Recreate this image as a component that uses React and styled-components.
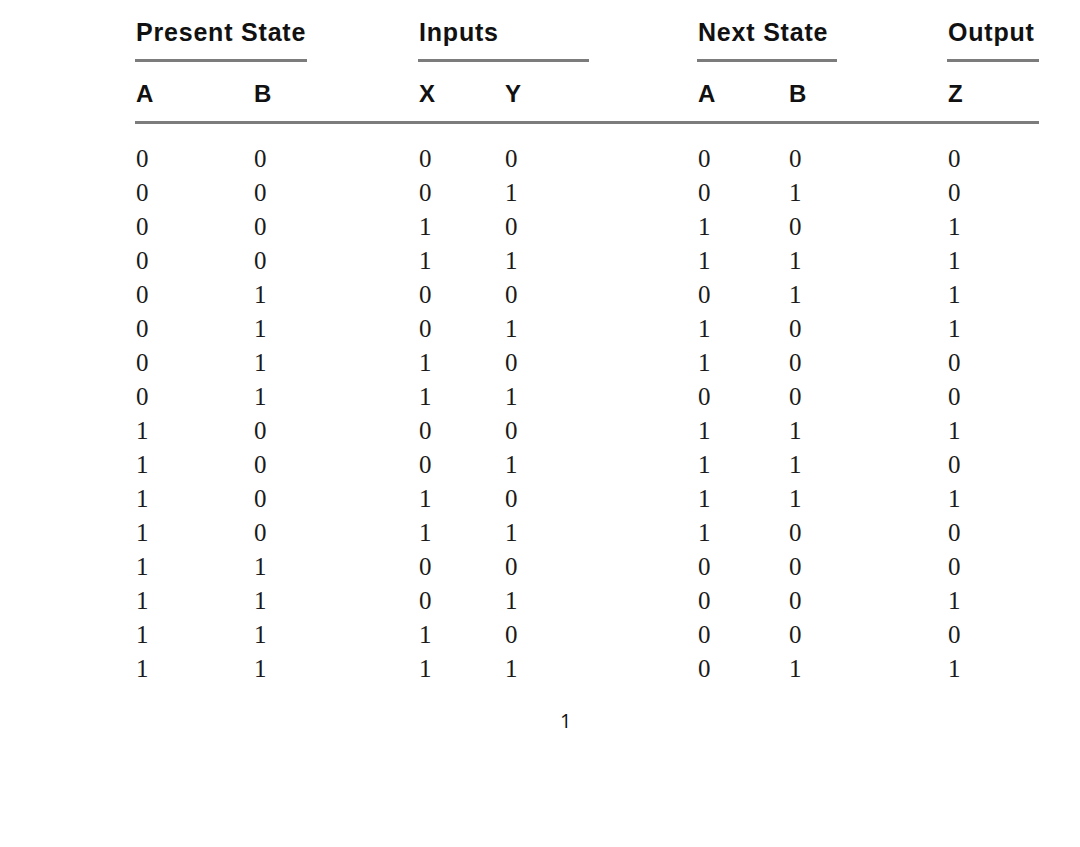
import React from "react";
import styled, { createGlobalStyle } from "styled-components";

const rows = [
  [0, 0, 0, 0, 0, 0, 0],
  [0, 0, 0, 1, 0, 1, 0],
  [0, 0, 1, 0, 1, 0, 1],
  [0, 0, 1, 1, 1, 1, 1],
  [0, 1, 0, 0, 0, 1, 1],
  [0, 1, 0, 1, 1, 0, 1],
  [0, 1, 1, 0, 1, 0, 0],
  [0, 1, 1, 1, 0, 0, 0],
  [1, 0, 0, 0, 1, 1, 1],
  [1, 0, 0, 1, 1, 1, 0],
  [1, 0, 1, 0, 1, 1, 1],
  [1, 0, 1, 1, 1, 0, 0],
  [1, 1, 0, 0, 0, 0, 0],
  [1, 1, 0, 1, 0, 0, 1],
  [1, 1, 1, 0, 0, 0, 0],
  [1, 1, 1, 1, 0, 1, 1],
];

const groups = [
  { label: "Present State", span: 2, rule: 172 },
  { label: "Inputs", span: 2, rule: 171 },
  { label: "Next State", span: 2, rule: 140 },
  { label: "Output", span: 1, rule: 92 },
];

const columns = ["A", "B", "X", "Y", "A", "B", "Z"];

const GlobalStyle = createGlobalStyle`
  body {
    margin: 0;
    background: #fff;
  }
`;

const Page = styled.div`
  width: 1080px;
  min-height: 847px;
  padding-top: 18px;
  box-sizing: border-box;
`;

const Table = styled.div`
  margin-left: 135px;
  width: 904px;
  display: grid;
  grid-template-columns: 118px 165px 86px 193px 91px 159px 92px;
`;

const Group = styled.div`
  grid-column: span ${(p) => p.span};
  display: flex;
  flex-direction: column;
`;

const GroupLabel = styled.div`
  padding-left: 1px;
  font-family: "Liberation Sans", Arial, sans-serif;
  font-weight: bold;
  font-size: 25px;
  line-height: 28px;
  letter-spacing: 0.8px;
  color: #111;
  white-space: nowrap;
`;

const GroupRule = styled.div`
  width: ${(p) => p.width}px;
  height: 3px;
  margin-top: 13px;
  background: #7c7c7c;
`;

const ColHead = styled.div`
  margin-top: 18px;
  padding-left: 1px;
  font-family: "Liberation Sans", Arial, sans-serif;
  font-weight: bold;
  font-size: 24px;
  line-height: 28px;
  color: #111;
`;

const HeadRule = styled.div`
  grid-column: 1 / -1;
  height: 3px;
  margin: 13px 0 18px;
  background: #7c7c7c;
`;

const Cell = styled.div`
  padding-left: 1px;
  font-family: "Liberation Serif", "Times New Roman", serif;
  font-size: 25px;
  line-height: 34px;
  color: #1a1a1a;
`;

const PageNumber = styled.div`
  margin-top: 21px;
  padding-left: 560px;
  font-family: "Open Sans", "Noto Sans", sans-serif;
  font-size: 20px;
  line-height: 28px;
  color: #111;
`;

const App = () => {
  return (
    <Page>
      <GlobalStyle />
      <Table>
        {groups.map((g) => (
          <Group key={g.label} span={g.span}>
            <GroupLabel>{g.label}</GroupLabel>
            <GroupRule width={g.rule} />
          </Group>
        ))}
        {columns.map((c, i) => (
          <ColHead key={i}>{c}</ColHead>
        ))}
        <HeadRule />
        {rows.map((r, i) =>
          r.map((v, j) => <Cell key={`${i}-${j}`}>{v}</Cell>)
        )}
      </Table>
      <PageNumber>1</PageNumber>
    </Page>
  );
};

export default App;
